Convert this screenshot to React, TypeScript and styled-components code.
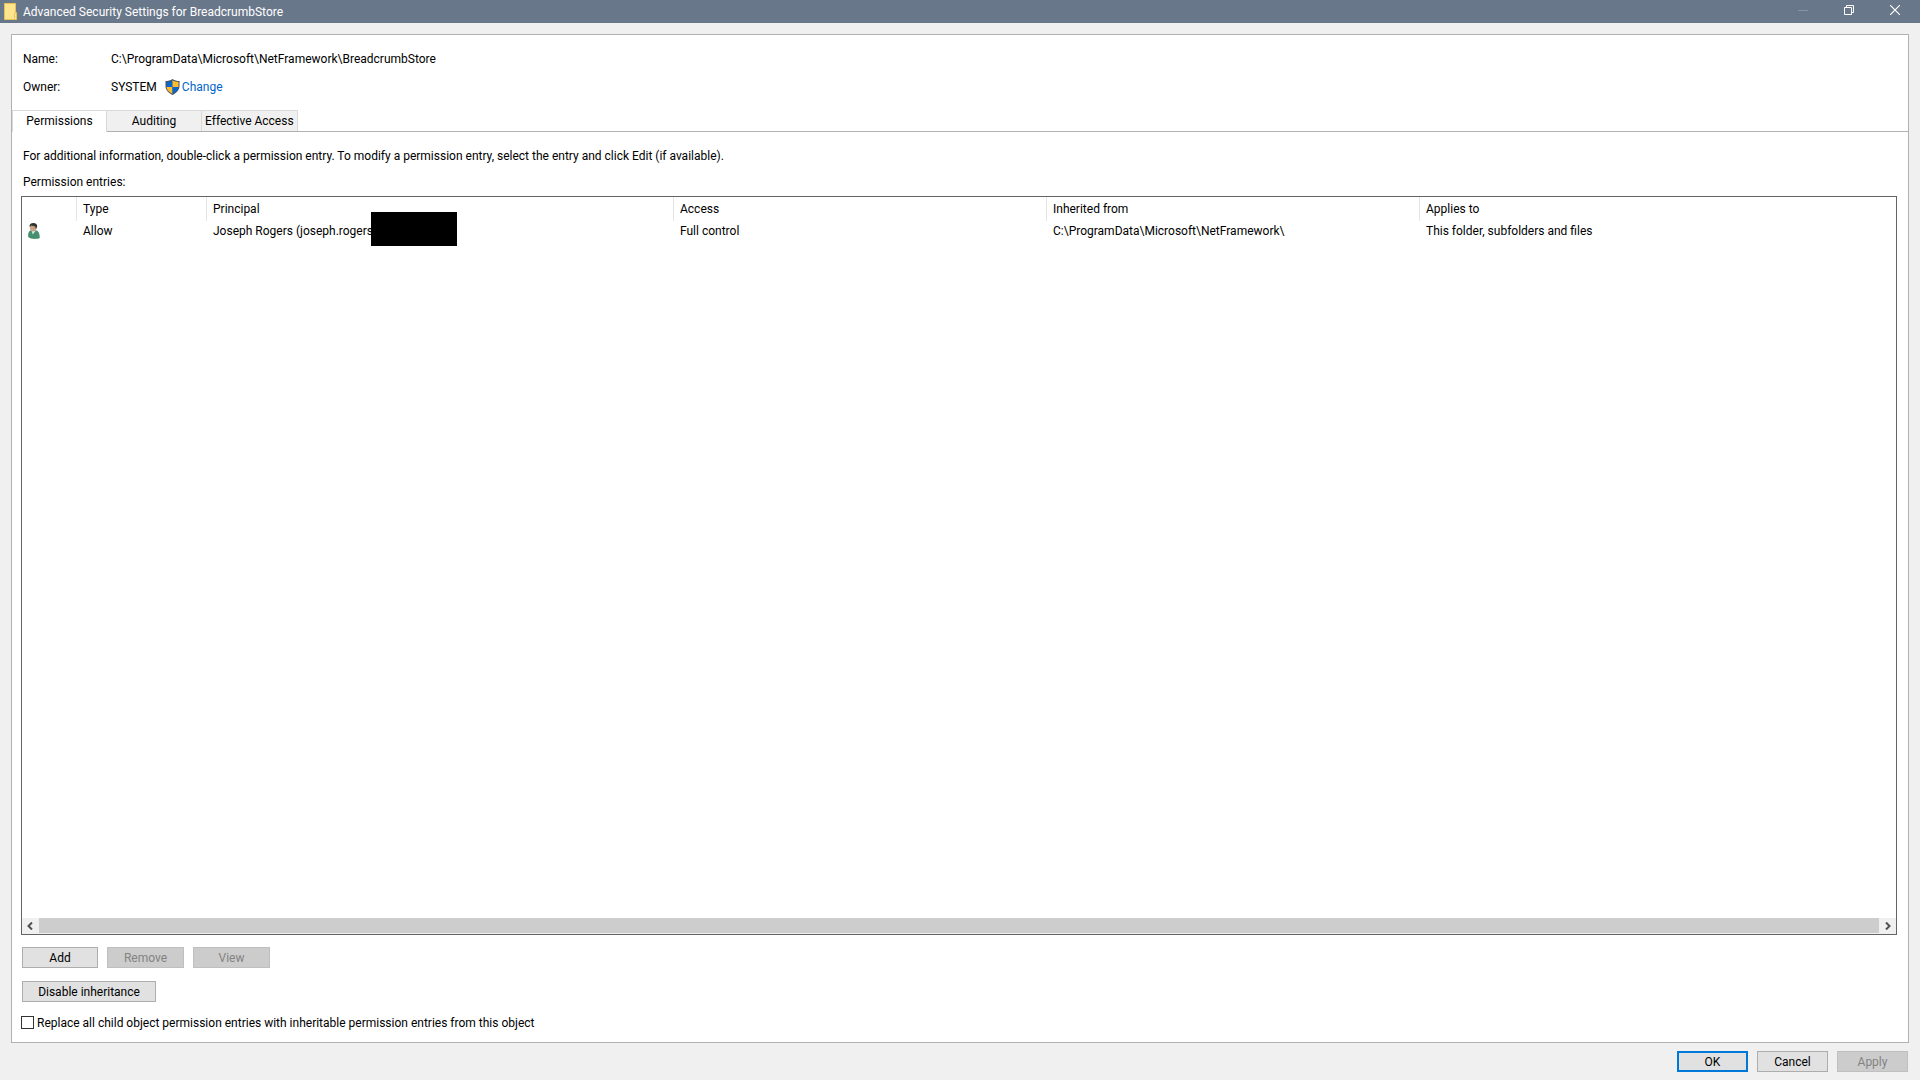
import React from "react";
import styled, { createGlobalStyle, css } from "styled-components";

const GlobalStyle = createGlobalStyle`
  * { box-sizing: border-box; }
  body {
    margin: 0;
    background: #f0f0f0;
    color: #000;
    font: 12px/16px Roboto, "Segoe UI", sans-serif;
  }
  button, input { font: inherit; }
`;

const Window = styled.div`
  display: flex;
  flex-direction: column;
  min-height: 100vh;
`;

const TitleBar = styled.header`
  display: flex;
  align-items: center;
  height: 23px;
  padding: 0 2px 0 4px;
  background: #69778a;
  color: #fff;
`;

const Title = styled.h1`
  flex: 1;
  margin: 0 0 0 6px;
  font-size: 12px;
  font-weight: 400;
`;

const CaptionButton = styled.button`
  display: flex;
  align-items: center;
  align-self: flex-start;
  justify-content: center;
  width: 46px;
  height: 20px;
  padding: 0;
  border: 0;
  background: none;
`;

const Panel = styled.main`
  display: flex;
  flex: 1;
  flex-direction: column;
  margin: 11px 11px 0;
  border: 1px solid #b1b1b1;
  background: #fff;
`;

const Details = styled.dl`
  display: grid;
  grid-template-columns: 88px 1fr;
  row-gap: 12px;
  margin: 0;
  padding: 16px 11px 15px;
`;

const Term = styled.dt``;

const Detail = styled.dd`
  display: flex;
  align-items: center;
  margin: 0;
`;

const ChangeLink = styled.a`
  display: flex;
  align-items: center;
  gap: 2px;
  margin-left: 8px;
  color: #0066cc;
  text-decoration: none;
`;

const TabStrip = styled.div`
  display: flex;
  border-bottom: 1px solid #b1b1b1;
`;

const Tab = styled.button<{ $active?: boolean }>`
  min-width: 95px;
  height: 21px;
  padding: 0 3px;
  border: 1px solid #d9d9d9;
  border-width: 1px 1px 0 0;
  background: #f0f0f0;
  color: #000;
  white-space: nowrap;
  ${(p) =>
    p.$active &&
    css`
      height: 22px;
      margin-bottom: -1px;
      padding-bottom: 1px;
      border-left-width: 1px;
      background: #fff;
    `}
`;

const Body = styled.section`
  display: flex;
  flex: 1;
  flex-direction: column;
  padding: 16px 11px 12px 9px;
`;

const Notes = styled.div`
  display: grid;
  gap: 10px;
  margin: 0 0 6px 2px;
`;

const Note = styled.p`
  margin: 0;
`;

const ListBox = styled.div`
  display: flex;
  flex: 1;
  flex-direction: column;
  margin-bottom: 12px;
  border: 1px solid #646464;
`;

const ListArea = styled.div`
  flex: 1;
`;

const Table = styled.table`
  width: 100%;
  table-layout: fixed;
  border-collapse: separate;
  border-spacing: 0;
`;

const Col = styled.col<{ $width?: number }>`
  width: ${(p) => (p.$width ? p.$width + "px" : "auto")};
`;

const HeadCell = styled.th`
  height: 24px;
  padding: 0 6px;
  border-right: 1px solid #e5e5e5;
  font-weight: 400;
  text-align: left;
  &:last-child { border-right: 0; }
`;

const Cell = styled.td`
  height: 20px;
  padding: 0 6px;
  white-space: nowrap;
`;

const Principal = styled.span`
  position: relative;
  display: block;
`;

const Redaction = styled.span`
  position: absolute;
  top: -11px;
  left: 158px;
  width: 86px;
  height: 34px;
  background: #000;
`;

const ScrollBar = styled.div`
  display: flex;
  height: 16px;
  padding-bottom: 1px;
  background: #f0f0f0;
`;

const ScrollButton = styled.button`
  display: flex;
  align-items: center;
  justify-content: center;
  width: 17px;
  padding: 0;
  border: 0;
  background: #f0f0f0;
`;

const Thumb = styled.div`
  flex: 1;
  background: #cdcdcd;
`;

const ButtonRow = styled.div`
  display: flex;
  gap: 9px;
  margin: 0 0 13px 1px;
`;

const Button = styled.button<{ $width: number; $primary?: boolean }>`
  width: ${(p) => p.$width}px;
  height: 21px;
  padding: 0;
  border: ${(p) => (p.$primary ? "2px solid #0078d7" : "1px solid #adadad")};
  background: #e1e1e1;
  color: #000;
  line-height: 16px;
  &:disabled {
    border-color: #bfbfbf;
    background: #cccccc;
    color: #838383;
  }
`;

const CheckLabel = styled.label`
  display: flex;
  align-items: center;
  gap: 3px;
  height: 15px;
`;

const CheckBox = styled.input`
  appearance: none;
  width: 13px;
  height: 13px;
  margin: 0;
  border: 1px solid #333;
  background: #fff;
`;

const Footer = styled.footer`
  display: flex;
  justify-content: flex-end;
  gap: 9px;
  padding: 8px 12px;
`;

const FolderIcon = () => (
  <svg width="13" height="17" viewBox="0 0 13 17" aria-hidden="true">
    <path d="M.5 .5h11v9h1v7H.5z" fill="#ffe48f" stroke="#e9c255" />
    <path d="M10.500 15.500V9.500" fill="none" stroke="#e9c255" />
  </svg>
);

const ShieldIcon = () => (
  <svg width="15" height="16" viewBox="0 0 15 16" aria-hidden="true">
    <path d="M7.500 0C5.500 1.600 3 2 .5 2v5c0 4 3 7 7 9 4-2 7-5 7-9V2C12 2 9.500 1.600 7.500 0z" fill="#4c5258" />
    <path d="M7.500 1.300V8h-6V3c2.200 0 4.300-.5 6-1.700z" fill="#0a66cb" />
    <path d="M7.500 1.300V8h6V3c-2.200 0-4.300-.5-6-1.700z" fill="#fdbc2f" />
    <path d="M1.500 8c.2 3.100 2.800 5.300 6 6.900V8z" fill="#fdbc2f" />
    <path d="M13.500 8c-.2 3.100-2.800 5.300-6 6.900V8z" fill="#0a66cb" />
  </svg>
);

const UserSvg = styled.svg`
  display: block;
`;

const UserIcon = () => (
  <UserSvg width="12" height="16" viewBox="0 0 12 16" aria-hidden="true">
    <path d="M.2 14c-.4-4 .8-6.500 3-6.700h4.500c3 .5 4.200 4 4 7.700-2 1.300-9.500 1.400-11.500-1z" fill="#46906f" />
    <path d="M3.500 7l1.200 4.500L7.500 8z" fill="#d9efe3" />
    <path d="M2 3c0-2 6-2 6 0v2.500c0 1.500-1.200 3-2.800 3S2 7 2 5.500z" fill="#c9a184" />
    <path d="M1.500 3C1.600 1 3.200 0 5.200 0 8 0 9.300 1.400 9.200 3.400L8 6.500 7.200 3.400 3.300 2.600 1.800 4z" fill="#32322f" />
  </UserSvg>
);

const columns = [
  { title: "", width: 55 },
  { title: "Type", width: 130 },
  { title: "Principal", width: 467 },
  { title: "Access", width: 373 },
  { title: "Inherited from", width: 373 },
  { title: "Applies to" },
];

export default function App() {
  return (
    <Window>
      <GlobalStyle />
      <TitleBar>
        <FolderIcon />
        <Title>Advanced Security Settings for BreadcrumbStore</Title>
        <CaptionButton aria-label="Minimize" disabled>
          <svg width="10" height="10"><path d="M0 5.500h10" stroke="#8793a3" /></svg>
        </CaptionButton>
        <CaptionButton aria-label="Restore">
          <svg width="10" height="10" fill="none" stroke="#fff">
            <path d="M.5 2.500h7v7h-7zM2.500 2.500v-2h7v7h-2" />
          </svg>
        </CaptionButton>
        <CaptionButton aria-label="Close">
          <svg width="10" height="10"><path d="M0 0l10 10M10 0L0 10" stroke="#fff" strokeWidth="1.200" /></svg>
        </CaptionButton>
      </TitleBar>

      <Panel>
        <Details>
          <Term>Name:</Term>
          <Detail>C:\ProgramData\Microsoft\NetFramework\BreadcrumbStore</Detail>
          <Term>Owner:</Term>
          <Detail>
            SYSTEM
            <ChangeLink href="#change"><ShieldIcon />Change</ChangeLink>
          </Detail>
        </Details>

        <TabStrip role="tablist">
          <Tab role="tab" aria-selected="true" $active>Permissions</Tab>
          <Tab role="tab" aria-selected="false">Auditing</Tab>
          <Tab role="tab" aria-selected="false">Effective Access</Tab>
        </TabStrip>

        <Body>
          <Notes>
            <Note>
              For additional information, double-click a permission entry. To modify a permission entry, select the entry and click Edit (if available).
            </Note>
            <Note>Permission entries:</Note>
          </Notes>
          <ListBox>
            <ListArea>
              <Table>
                <colgroup>
                  {columns.map((c) => <Col key={c.title} $width={c.width} />)}
                </colgroup>
                <thead>
                  <tr>{columns.map((c) => <HeadCell key={c.title}>{c.title}</HeadCell>)}</tr>
                </thead>
                <tbody>
                  <tr>
                    <Cell><UserIcon /></Cell>
                    <Cell>Allow</Cell>
                    <Cell><Principal>Joseph Rogers (joseph.rogers<Redaction /></Principal></Cell>
                    <Cell>Full control</Cell>
                    <Cell>C:\ProgramData\Microsoft\NetFramework\</Cell>
                    <Cell>This folder, subfolders and files</Cell>
                  </tr>
                </tbody>
              </Table>
            </ListArea>
            <ScrollBar>
              <ScrollButton aria-label="Scroll left">
                <svg width="8" height="8" fill="none" stroke="#505050" strokeWidth="2"><path d="M5 .5L1.500 4 5 7.500" /></svg>
              </ScrollButton>
              <Thumb />
              <ScrollButton aria-label="Scroll right">
                <svg width="6" height="8" fill="none" stroke="#505050" strokeWidth="2"><path d="M1 .5L4.500 4 1 7.500" /></svg>
              </ScrollButton>
            </ScrollBar>
          </ListBox>
          <ButtonRow>
            <Button $width={76}>Add</Button>
            <Button $width={77} disabled>Remove</Button>
            <Button $width={77} disabled>View</Button>
          </ButtonRow>
          <ButtonRow>
            <Button $width={134}>Disable inheritance</Button>
          </ButtonRow>
          <CheckLabel>
            <CheckBox type="checkbox" />
            Replace all child object permission entries with inheritable permission entries from this object
          </CheckLabel>
        </Body>
      </Panel>

      <Footer>
        <Button $width={71} $primary>OK</Button>
        <Button $width={71}>Cancel</Button>
        <Button $width={71} disabled>Apply</Button>
      </Footer>
    </Window>
  );
}
